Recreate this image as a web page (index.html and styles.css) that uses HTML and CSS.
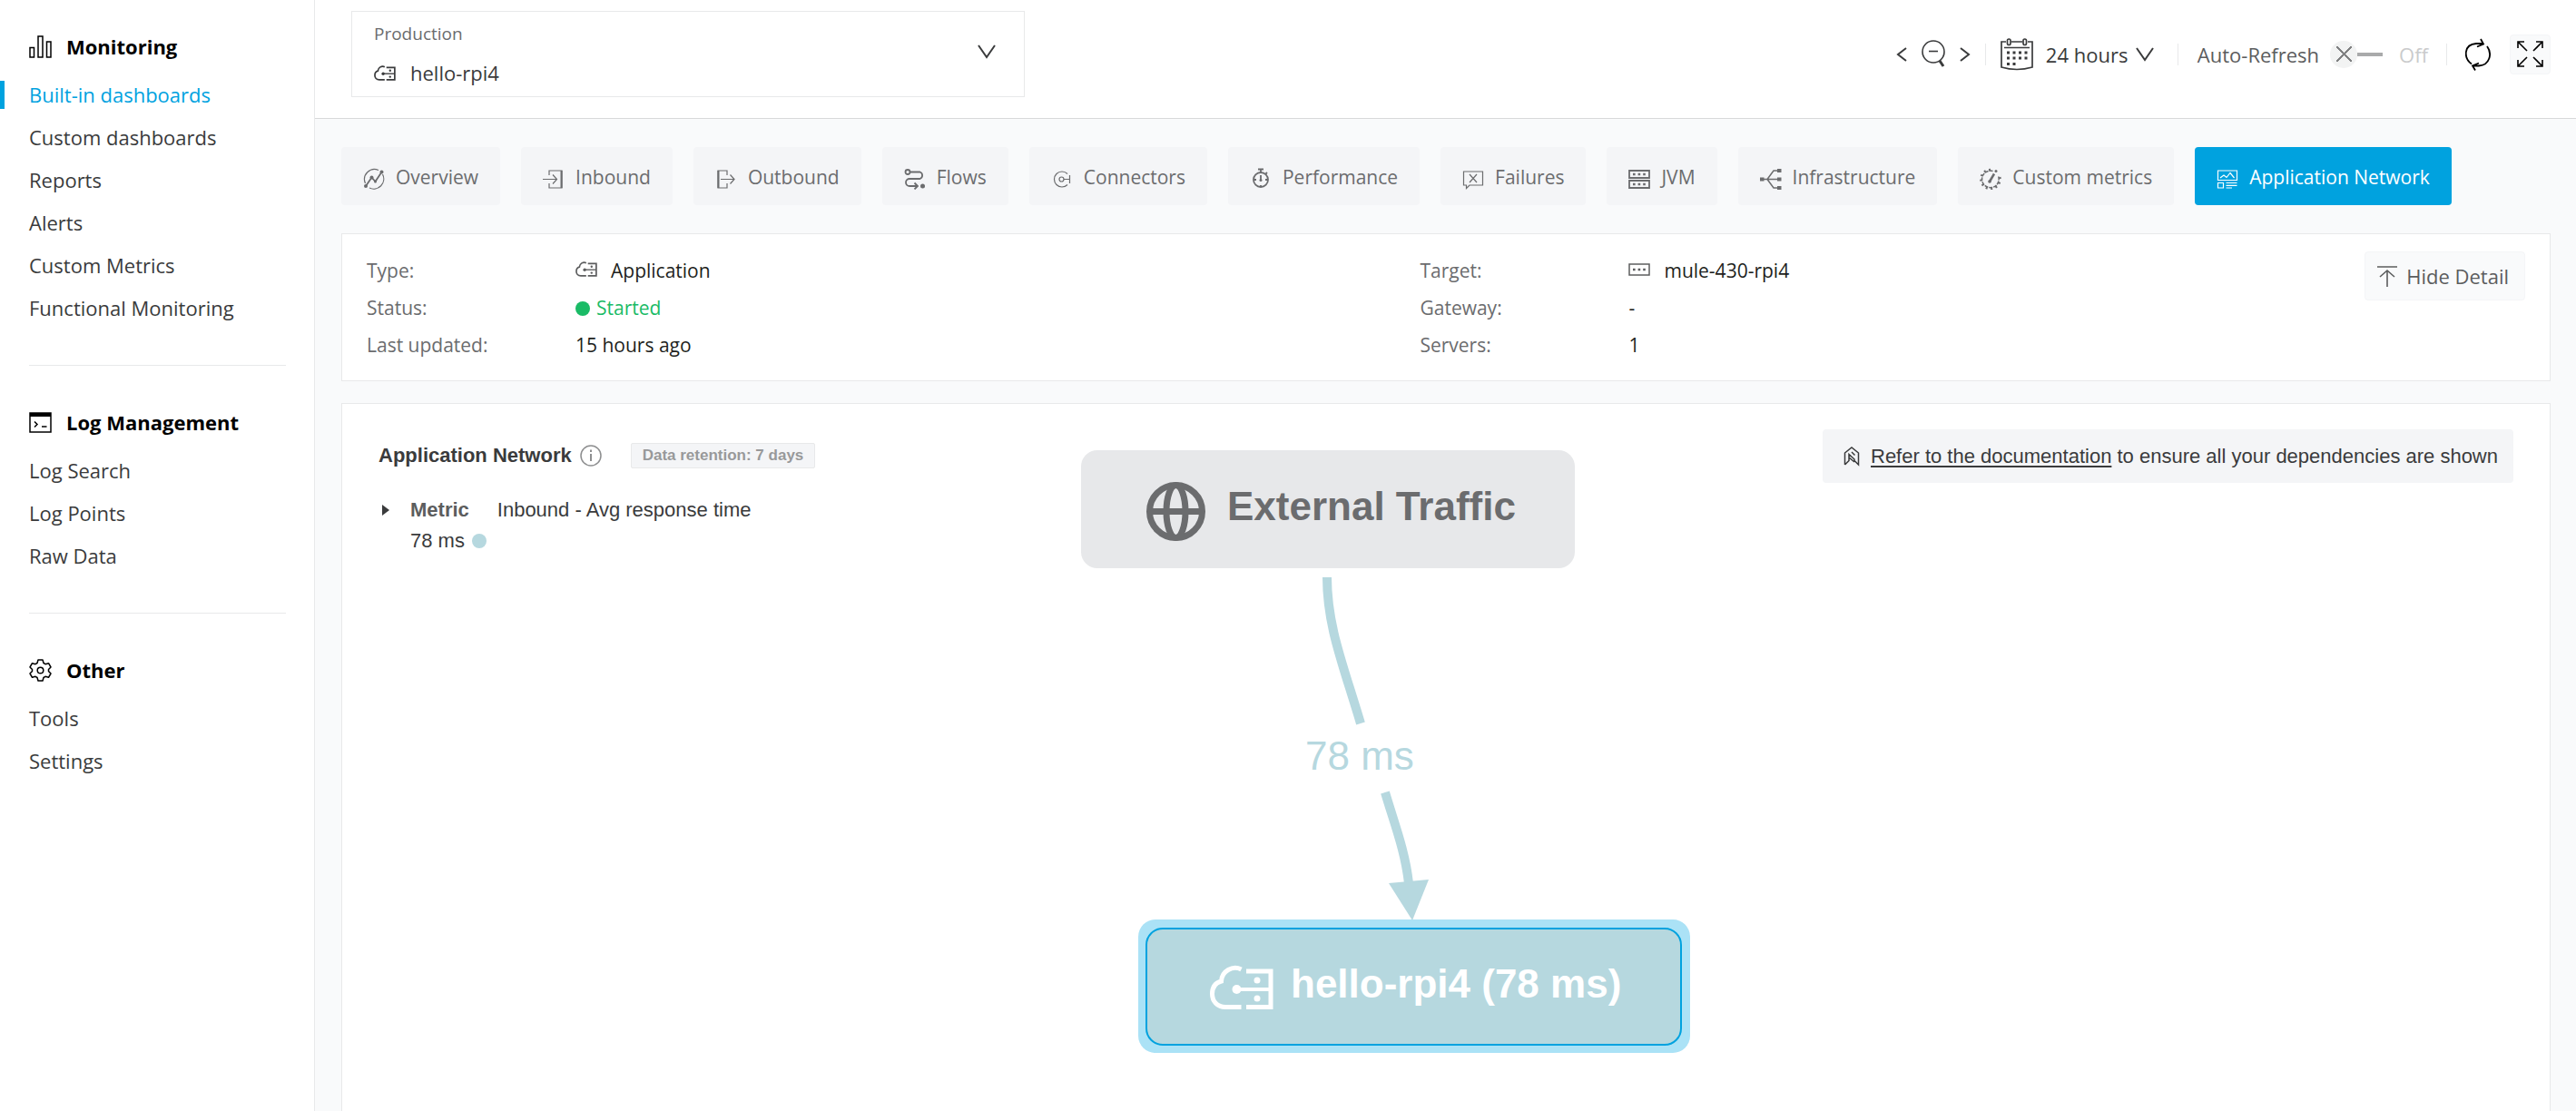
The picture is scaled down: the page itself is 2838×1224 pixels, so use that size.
FILE: index.html
```html
<!DOCTYPE html>
<html lang="en">
<head>
    <meta charset="UTF-8">
    <meta name="viewport" content="width=device-width, initial-scale=1.0">
    <title>Monitoring - Application Network</title>
    <link rel="stylesheet" href="styles.css">
</head>
<body>
    <svg class="sprite" aria-hidden="true">
        <symbol id="cloud" viewBox="0 0 70 50">
            <g fill="none" stroke="currentColor" stroke-width="5">
                <path d="M34.500 5C25 0 13 7 12.500 18C5 20 2.500 26 2.500 32C2.500 40 8 46.500 17 46.500H34.500"/>
                <path d="M40 7H67V46.500H40"/>
                <path d="M29 27H67" stroke-width="4"/>
            </g>
            <g fill="currentColor">
                <circle cx="29.500" cy="27" r="5"/>
                <circle cx="52" cy="17" r="3.500"/>
                <circle cx="52" cy="37" r="3.500"/>
            </g>
        </symbol>
        <symbol id="chevron" viewBox="0 0 20 16">
            <path d="M1 1L10 14L19 1" fill="none" stroke="currentColor" stroke-width="2"/>
        </symbol>
    </svg>

    <aside class="sidebar">
        <nav class="section">
            <h2>
                <svg width="25" height="25" viewBox="0 0 25 25" fill="none" stroke="currentColor" stroke-width="1.500">
                    <path d="M1 13.500H5.500V24H1zM10 1H15V24H10zM19.500 7H24V24H19.500z"/>
                </svg>
                Monitoring
            </h2>
            <a href="#" class="active">Built-in dashboards</a>
            <a href="#">Custom dashboards</a>
            <a href="#">Reports</a>
            <a href="#">Alerts</a>
            <a href="#">Custom Metrics</a>
            <a href="#">Functional Monitoring</a>
        </nav>
        <nav class="section">
            <h2>
                <svg width="25" height="25" viewBox="0 0 25 25" fill="none" stroke="currentColor" stroke-width="1.500">
                    <rect x="1" y="2" width="23" height="21"/>
                    <path d="M1 4H24" stroke-width="4"/>
                    <path d="M6 11.500L9 14.500L6 17.500M14 17H19.500"/>
                </svg>
                Log Management
            </h2>
            <a href="#">Log Search</a>
            <a href="#">Log Points</a>
            <a href="#">Raw Data</a>
        </nav>
        <nav class="section">
            <h2>
                <svg width="25" height="25" viewBox="0 0 25 25" fill="none" stroke="currentColor" stroke-width="1.500" stroke-linejoin="round">
                    <path d="M10 1H15L16 4.500L18 5.700L21.500 4.700L24 9L21.500 11.500V13.500L24 16L21.500 20.300L18 19.300L16 20.500L15 24H10L9 20.500L7 19.300L3.500 20.300L1 16L3.500 13.500V11.500L1 9L3.500 4.700L7 5.700L9 4.500z"/>
                    <circle cx="12.500" cy="12.500" r="3.300"/>
                </svg>
                Other
            </h2>
            <a href="#">Tools</a>
            <a href="#">Settings</a>
        </nav>
    </aside>

    <div class="page">
        <header class="topbar">
            <div class="app-picker">
                <div class="picker-text">
                    <label for="app">Production</label>
                    <div class="picker-value">
                        <svg width="24" height="17"><use href="#cloud"/></svg>
                        <select id="app"><option>hello-rpi4</option></select>
                    </div>
                </div>
                <svg class="chevron" width="20" height="16"><use href="#chevron"/></svg>
            </div>

            <div class="toolbar">
                <div class="range">
                    <button aria-label="Back">
                        <svg width="12" height="16" viewBox="0 0 12 16" fill="none" stroke="currentColor" stroke-width="2"><path d="M11 1L2 8L11 15"/></svg>
                    </button>
                    <button aria-label="Zoom out">
                        <svg width="26" height="32" viewBox="0 0 26 32" fill="none" stroke="currentColor" stroke-width="1.600">
                            <circle cx="13" cy="13" r="12"/>
                            <path d="M8 12.500H18"/>
                            <path d="M20 23L24 29" stroke-width="3"/>
                        </svg>
                    </button>
                    <button aria-label="Forward">
                        <svg width="12" height="16" viewBox="0 0 12 16" fill="none" stroke="currentColor" stroke-width="2"><path d="M1 1L10 8L1 15"/></svg>
                    </button>
                </div>
                <span class="divider near"></span>
                <div class="period">
                    <svg width="36" height="36" viewBox="0 0 36 36" fill="none" stroke="currentColor" stroke-width="1.700">
                        <path d="M6 4H1V32Q18 37 35 32V4H30M12 4H24M4 10.500H32"/>
                        <rect x="7.500" y="1" width="3.500" height="6.500" rx="1.700"/>
                        <rect x="25" y="1" width="3.500" height="6.500" rx="1.700"/>
                        <path d="M7 16H31M7 22H31M7 28.500H18" stroke-dasharray="3 3.500" stroke-width="3"/>
                    </svg>
                    <select aria-label="Time period"><option>24 hours</option></select>
                    <svg class="chevron" width="20" height="16"><use href="#chevron"/></svg>
                </div>
                <span class="divider"></span>
                <label class="auto-refresh">
                    Auto-Refresh
                    <input type="checkbox" role="switch">
                    <span class="off">Off</span>
                </label>
                <span class="divider"></span>
                <button class="refresh" aria-label="Refresh">
                    <svg width="28" height="36" viewBox="0 0 28 36" fill="none" stroke="currentColor" stroke-width="1.800">
                        <path d="M7 28.500C-2 22 -2 7 12 6H20M13 9.500L20 6.500L17 1"/>
                        <path d="M24 9C30 17 27 30 15 30.500H8M15 27.500L8 30.500L11 35.500"/>
                    </svg>
                </button>
                <button class="expand" aria-label="Full screen">
                    <svg width="29" height="29" viewBox="0 0 29 29" fill="none" stroke="currentColor" stroke-width="1.600">
                        <path d="M1 8V1H8M1 1L11 11M21 1H28V8M28 1L18 11M1 21V28H8M1 28L11 18M28 21V28H21M28 28L18 18"/>
                    </svg>
                </button>
            </div>
        </header>

        <main>
            <nav class="tabs">
                <a href="#">
                    <svg width="24" height="24" viewBox="0 0 24 24">
                        <path d="M17 2.500A11 11 0 0 0 2.500 17M7 22A11 11 0 0 0 21.500 7"/>
                        <path d="M3 20L9.500 10.500L13.500 15L20.500 4.500" stroke-width="1.800"/>
                        <g class="dots"><circle cx="3" cy="20" r="2"/><circle cx="9.500" cy="10.500" r="2"/><circle cx="13.500" cy="15" r="1.500"/><circle cx="20.500" cy="4.500" r="2"/></g>
                    </svg>
                    Overview
                </a>
                <a href="#">
                    <svg width="24" height="24" viewBox="0 0 24 24">
                        <path d="M7 8V3H21V22H7V17M0 12.500H15M11 7.500L15.500 12.500L11 17.500"/>
                        <path d="M20.500 3V22" stroke-width="2"/>
                    </svg>
                    Inbound
                </a>
                <a href="#">
                    <svg width="24" height="24" viewBox="0 0 24 24">
                        <path d="M13 8V3H3V22H13V17M6 12.500H21M16.500 7.500L21 12.500L16.500 17.500"/>
                        <path d="M3.500 3V22" stroke-width="2"/>
                    </svg>
                    Outbound
                </a>
                <a href="#">
                    <svg width="24" height="24" viewBox="0 0 24 24" class="bold">
                        <circle cx="4" cy="4.500" r="2.500"/>
                        <path d="M7 4.500H17.500A4 4 0 0 1 17.500 12H6A4 4 0 0 0 6 20H14M11.500 16.500L15 20L11.500 23.500"/>
                        <g class="dots"><circle cx="20.500" cy="20" r="2.500"/></g>
                    </svg>
                    Flows
                </a>
                <a href="#">
                    <svg width="24" height="24" viewBox="0 0 24 24">
                        <path d="M18 6.500A8.500 8.500 0 1 0 18 18.500M14 12.500H21M20.500 8V17"/>
                        <circle cx="11.500" cy="12.500" r="2.500"/>
                    </svg>
                    Connectors
                </a>
                <a href="#">
                    <svg width="24" height="24" viewBox="0 0 24 24" class="bold">
                        <circle cx="12" cy="13" r="8"/>
                        <path d="M12 5V1.500M9 1.500H15M12 8V14M5 13H7M17 13H19M12 19V21M17.500 6.500L19 5"/>
                        <g class="dots"><circle cx="12" cy="13.500" r="1.500"/></g>
                    </svg>
                    Performance
                </a>
                <a href="#">
                    <svg width="24" height="24" viewBox="0 0 24 24">
                        <path d="M1.500 4H22.500V19H8L4.500 22.500V19H1.500zM8 7L16 16M16 7L8 16"/>
                    </svg>
                    Failures
                </a>
                <a href="#">
                    <svg width="24" height="24" viewBox="0 0 24 24" class="bold">
                        <path d="M1 3H23V11H1zM1 14H23V22H1z"/>
                        <path d="M5 7H19.500M5 18H19.500" stroke-width="2.600" stroke-dasharray="2.600 3"/>
                    </svg>
                    JVM
                </a>
                <a href="#">
                    <svg width="24" height="24" viewBox="0 0 24 24">
                        <path d="M3 12.500H21M8 12.500L15 3H21M8 12.500L15 22H21" stroke-width="1.500"/>
                        <g class="dots"><path d="M0 10.500H4.500V14.500H0zM19 1H23.500V5H19zM19 10.500H23.500V14.500H19zM19 20H23.500V24H19z"/></g>
                    </svg>
                    Infrastructure
                </a>
                <a href="#">
                    <svg width="24" height="24" viewBox="0 0 24 24">
                        <path d="M14.500 3.500A9.300 9.300 0 1 0 20.500 9" stroke-width="1.500" stroke-dasharray="4 1"/>
                        <path d="M12 2A10.500 10.500 0 1 0 22 9.500" stroke-width="2.500" stroke-dasharray="2 3.500"/>
                        <path d="M11 15L16 6.500" stroke-width="2.500"/>
                        <g class="dots"><circle cx="11" cy="15" r="1.800"/><circle cx="18" cy="3.500" r="1.500"/></g>
                    </svg>
                    Custom metrics
                </a>
                <a href="#" class="active">
                    <svg width="24" height="24" viewBox="0 0 24 24">
                        <path d="M1.500 3H22.500V13.500H1.500zM4 11L8 8L11 10.500L15 5.500L19.500 11M1.500 16.500H7.500V22H1.500zM10.500 16.500H22.500M10.500 19.300H22.500M10.500 22H17"/>
                    </svg>
                    Application Network
                </a>
            </nav>

            <section class="card details">
                <dl>
                    <dt>Type:</dt>
                    <dd><svg class="type-icon" width="24" height="17"><use href="#cloud"/></svg>Application</dd>
                    <dt>Status:</dt>
                    <dd class="started"><span class="status-dot"></span>Started</dd>
                    <dt>Last updated:</dt>
                    <dd>15 hours ago</dd>
                </dl>
                <dl>
                    <dt>Target:</dt>
                    <dd>
                        <svg class="type-icon" width="24" height="14" viewBox="0 0 24 14" fill="none" stroke="currentColor" stroke-width="1.500">
                            <rect x="1" y="1" width="22" height="12"/>
                            <path d="M5 7H19.500" stroke-width="2.600" stroke-dasharray="2.600 3"/>
                        </svg>mule-430-rpi4
                    </dd>
                    <dt>Gateway:</dt>
                    <dd>-</dd>
                    <dt>Servers:</dt>
                    <dd>1</dd>
                </dl>
                <button class="hide-detail">
                    <svg width="22" height="24" viewBox="0 0 22 24" fill="none" stroke="currentColor" stroke-width="1.600">
                        <path d="M0 2H22M11 24V6M3 13L11 6L19 13"/>
                    </svg>
                    Hide Detail
                </button>
            </section>

            <section class="card network">
                <!-- traffic map -->
                <svg class="map" viewBox="0 0 2432 779">
                    <rect class="external" x="814" y="51" width="544" height="130" rx="18"/>
                    <g fill="none" stroke="#6b6c6e" stroke-width="7">
                        <circle cx="918.500" cy="118.500" r="29"/>
                        <ellipse cx="918.500" cy="118.500" rx="10.500" ry="29"/>
                        <path d="M890 118.500H947"/>
                    </g>
                    <text class="external-name" x="975" y="128">External Traffic</text>

                    <path class="edge" d="M1085 191C1085 245 1103 288 1122 352"/>
                    <text class="edge-label" x="1061" y="403">78 ms</text>
                    <path class="edge" d="M1149 428C1159 462 1171 492 1175 528"/>

                    <rect class="glow" x="877" y="568" width="608" height="147" rx="19"/>
                    <path class="arrow" d="M1153 528L1197 524L1179 569z"/>
                    <rect class="app" x="886" y="578" width="589" height="128" rx="18"/>
                    <use class="app-icon" href="#cloud" x="956" y="618" width="70" height="50"/>
                    <text class="app-name" x="1045" y="654">hello-rpi4 (78 ms)</text>
                </svg>

                <div class="network-header">
                    <div class="legend">
                        <div class="title">
                            <h1>Application Network</h1>
                            <svg width="24" height="24" viewBox="0 0 24 24" fill="none" stroke="#8e8f90" stroke-width="1.500">
                                <circle cx="12" cy="12" r="11"/>
                                <path d="M12 10V18M12 5.500V8" stroke-width="2"/>
                            </svg>
                            <span class="badge">Data retention: 7 days</span>
                        </div>
                        <div class="metric">
                            <button aria-label="Show metrics">
                                <svg width="8" height="12" viewBox="0 0 8 12" fill="currentColor"><path d="M0 0L8 6L0 12z"/></svg>
                            </button>
                            <strong>Metric</strong>
                            <span>Inbound - Avg response time</span>
                        </div>
                        <div class="metric-value">78 ms<span class="metric-dot"></span></div>
                    </div>
                    <p class="docs">
                        <svg width="18" height="22" viewBox="0 0 18 22" fill="none" stroke="currentColor" stroke-width="1.500">
                            <path d="M1.500 20V7L9 1L16.500 7V20L12 15.500M1.500 20L6 15.500M6 16V8.500L12 14V16M6 12L12 17M9 6L12.500 9.500"/>
                        </svg>
                        <span><a href="#">Refer to the documentation</a> to ensure all your dependencies are shown</span>
                    </p>
                </div>
            </section>
        </main>
    </div>
</body>
</html>
```

FILE: styles.css
```css
* {
    box-sizing: border-box;
}
body {
    margin: 0;
    min-height: 100vh;
    display: flex;
    background-color: #f9fafb;
    color: #3a3b3c;
    font-family: "Open Sans", "Noto Sans", sans-serif;
    font-size: 22px;
    line-height: 30px;
}
h1, h2, p, dl, dd {
    margin: 0;
}
a {
    color: inherit;
    text-decoration: none;
}
svg {
    display: block;
    flex: none;
}
button, select {
    appearance: none;
    padding: 0;
    border: none;
    background: none;
    color: inherit;
    font: inherit;
    cursor: pointer;
}
.sprite {
    position: absolute;
    width: 0;
    height: 0;
}

/* sidebar */
.sidebar {
    flex: none;
    width: 347px;
    padding-top: 36px;
    background-color: #fff;
    border-right: 1px solid #e8e9ea;
}
.section h2 {
    display: flex;
    align-items: center;
    gap: 16px;
    margin: 0 32px 15px;
    color: #000;
    font-size: 22px;
    font-weight: 700;
}
.section a {
    display: block;
    position: relative;
    padding: 0 32px;
    line-height: 47px;
}
.section a.active {
    color: #00a2df;
}
.section a.active::before {
    content: "";
    position: absolute;
    left: 0;
    top: 8px;
    width: 5px;
    height: 31px;
    background-color: #00a2df;
}
.section + .section::before {
    content: "";
    display: block;
    height: 1px;
    margin: 39px 31px 47px 32px;
    background-color: #e8e9ea;
}

/* top bar */
.page {
    flex: 1;
    min-width: 0;
    display: flex;
    flex-direction: column;
}
.topbar {
    display: flex;
    justify-content: space-between;
    align-items: center;
    padding: 12px 28px 23px 40px;
    background-color: #fff;
    border-bottom: 1px solid #d8d9da;
}
.app-picker {
    flex: 0 1 742px;
    display: flex;
    align-items: center;
    padding: 11px 31px 11px 24px;
    border: 1px solid #e8e9ea;
}
.app-picker .chevron {
    margin-bottom: 6px;
}
.picker-text {
    flex: 1;
}
.picker-text label {
    display: block;
    margin-bottom: 15px;
    color: #6b6c6e;
    font-size: 19px;
    line-height: 26px;
}
.picker-value {
    display: flex;
    align-items: center;
    gap: 16px;
}
.picker-value select {
    flex: 1;
}
.toolbar, .range, .period, .auto-refresh {
    display: flex;
    align-items: center;
}
.range {
    gap: 16px;
}
.divider {
    width: 1px;
    height: 24px;
    margin: 0 20px;
    background-color: #e8e9ea;
}
.divider.near {
    margin: 0 16px;
}
.period {
    gap: 8px;
    padding-right: 6px;
}
.period > svg:first-child {
    margin-right: 6px;
}
.auto-refresh {
    padding-left: 1px;
    color: #5c5d5e;
}
.auto-refresh input {
    appearance: none;
    width: 58px;
    height: 30px;
    margin: 0 18px 0 12px;
    background: linear-gradient(#a9aaab, #a9aaab) right center / 28px 4px no-repeat;
}
.auto-refresh input::before {
    content: "";
    display: block;
    width: 30px;
    height: 30px;
    border-radius: 50%;
    background:
        linear-gradient(45deg, transparent 47%, #808182 47% 53%, transparent 53%) center / 17px 17px no-repeat,
        linear-gradient(-45deg, transparent 47%, #808182 47% 53%, transparent 53%) center / 17px 17px no-repeat,
        #f2f3f3;
}
.off {
    color: #cacbcc;
}
.refresh {
    margin-right: 21px;
    color: #000;
}
.expand {
    display: grid;
    place-items: center;
    width: 45px;
    height: 44px;
    background-color: #f9fafb;
    border: 1px solid #f4f5f7;
    border-radius: 4px;
    color: #000;
}

/* tabs */
main {
    flex: 1;
    display: flex;
    flex-direction: column;
    padding: 31px 28px 0 29px;
}
.tabs {
    display: flex;
    flex-wrap: wrap;
    gap: 23px;
    margin-bottom: 31px;
}
.tabs a {
    display: flex;
    align-items: center;
    gap: 12px;
    height: 64px;
    padding: 2px 24px 0;
    background-color: #f4f5f7;
    border-radius: 4px;
    color: #6b6c6e;
    font-size: 21px;
}
.tabs a.active {
    background-color: #00a2df;
    color: #fff;
}
.tabs svg {
    margin-top: 3px;
    fill: none;
    stroke: currentColor;
    stroke-width: 1.2;
}
.tabs svg.bold {
    stroke-width: 1.8;
}
.tabs .dots {
    fill: currentColor;
    stroke: none;
}

/* details */
.card {
    background-color: #fff;
    border: 1px solid #e8e9ea;
}
.details {
    display: flex;
    align-items: flex-start;
    margin-bottom: 24px;
    padding: 19px 27px;
    font-size: 21px;
}
.details dl {
    flex: 0 0 48.8%;
    display: grid;
    grid-template-columns: 230px 1fr;
    padding-top: 1px;
    margin-bottom: -1px;
    line-height: 41px;
}
.details dl + dl {
    flex: 1;
}
.details dt {
    color: #6b6c6e;
}
.details dd {
    display: flex;
    align-items: center;
    color: #1e1f20;
}
.type-icon {
    margin: 0 15px 4px 0;
    color: #5c5d5e;
}
.details .started {
    color: #1abb66;
}
.status-dot {
    width: 16px;
    height: 16px;
    margin-right: 7px;
    border-radius: 50%;
    background-color: #1abb66;
}
.hide-detail {
    display: flex;
    align-items: center;
    gap: 10px;
    height: 54px;
    padding: 0 17px 0 13px;
    background-color: #f9fafb;
    border: 1px solid #f4f5f7;
    border-radius: 4px;
    color: #5c5d5e;
    font-size: 22px;
}

/* network */
.network {
    flex: 1;
    display: grid;
    border-bottom: none;
    font-family: "Liberation Sans", Arial, sans-serif;
}
.map, .network-header {
    grid-area: 1 / 1;
}
.map {
    width: 100%;
    height: auto;
    font-size: 44px;
}
.external {
    fill: #e7e8ea;
}
.external-name {
    fill: #6b6c6e;
    font-weight: 700;
}
.edge {
    fill: none;
    stroke: #b6d8df;
    stroke-width: 10;
}
.edge-label, .arrow {
    fill: #b6d8df;
}
.glow {
    fill: #abe2f6;
}
.app {
    fill: #b6d8df;
    stroke: #00a2df;
    stroke-width: 2;
}
.app-icon {
    color: #fff;
}
.app-name {
    fill: #fff;
    font-weight: 700;
}
.network-header {
    display: flex;
    justify-content: space-between;
    align-items: flex-start;
    align-self: start;
    position: relative;
    padding: 28px 40px;
}
.legend {
    padding-top: 13px;
}
.title {
    display: flex;
    align-items: center;
    margin-bottom: 27px;
}
.title h1 {
    margin-right: 9px;
    font-size: 22px;
    line-height: 32px;
}
.badge {
    margin-left: 32px;
    padding: 0 12px;
    background-color: #f4f5f7;
    border: 1px solid #e8e9ea;
    border-radius: 2px;
    color: #98999a;
    font-size: 17px;
    font-weight: 700;
    line-height: 26px;
}
.metric {
    display: flex;
    align-items: center;
    line-height: 34px;
}
.metric button {
    width: 35px;
    padding-left: 4px;
}
.metric strong {
    margin-right: 31px;
    color: #5c5d5e;
}
.metric-value {
    display: flex;
    align-items: center;
    gap: 8px;
    padding-left: 35px;
    line-height: 34px;
}
.metric-dot {
    width: 16px;
    height: 16px;
    border-radius: 50%;
    background-color: #b6d8df;
}
.docs {
    display: flex;
    align-items: center;
    gap: 12px;
    height: 59px;
    padding: 0 17px 0 23px;
    background-color: #f4f5f7;
    border-radius: 4px;
}
.docs a {
    text-decoration: underline;
    text-underline-offset: 3px;
}
```
